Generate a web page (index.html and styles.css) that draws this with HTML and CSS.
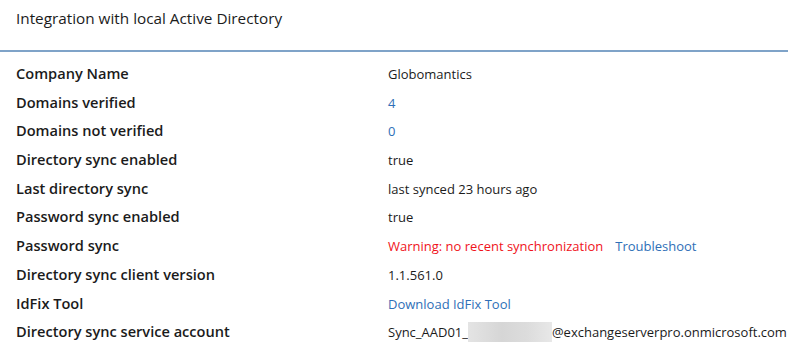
FILE: index.html
```html
<!doctype html>
<html lang="en">
  <head>
    <meta charset="UTF-8" />
    <title>Integration with local Active Directory</title>
    <link rel="stylesheet" href="styles.css">
  </head>
  <body>
    <main class="panel">
      <header class="panel-header">
        <h1 class="panel-title">Integration with local Active Directory</h1>
      </header>

      <dl class="props">
        <dt>Company Name</dt>
        <dd>Globomantics</dd>

        <dt>Domains verified</dt>
        <dd><a href="#" class="link">4</a></dd>

        <dt>Domains not verified</dt>
        <dd><a href="#" class="link">0</a></dd>

        <dt>Directory sync enabled</dt>
        <dd>true</dd>

        <dt>Last directory sync</dt>
        <dd>last synced 23 hours ago</dd>

        <dt>Password sync enabled</dt>
        <dd>true</dd>

        <dt>Password sync</dt>
        <dd>
          <span class="warning">Warning: no recent synchronization</span>
          <a href="#" class="link">Troubleshoot</a>
        </dd>

        <dt>Directory sync client version</dt>
        <dd>1.1.561.0</dd>

        <dt>IdFix Tool</dt>
        <dd><a href="#" class="link">Download IdFix Tool</a></dd>

        <dt>Directory sync service account</dt>
        <dd class="account">Sync_AAD01_<span class="redacted"></span>@exchangeserverpro.onmicrosoft.com</dd>
      </dl>
    </main>
  </body>
</html>
```

FILE: styles.css
```css
* {
  margin: 0;
  padding: 0;
  box-sizing: border-box;
}

body {
  font-family: "Open Sans", "Noto Sans", sans-serif;
  font-size: 13px;
  color: #1b1b1b;
  background: #ffffff;
  width: 802px;
  height: 360px;
  overflow: hidden;
}

.panel {
  width: 788px;
}

.panel-header {
  height: 52px;
  padding: 7px 16px 0;
  border-bottom: 2px solid #7fa3c8;
}

.panel-title {
  font-size: 15.3px;
  font-weight: 500;
  color: #1b1b1b;
  line-height: 22px;
}

.props {
  display: grid;
  grid-template-columns: 372px 1fr;
  grid-auto-rows: 28.7px;
  align-items: baseline;
  padding: 10px 0 0 16px;
  line-height: 22px;
}

.props dt {
  font-size: 14.6px;
  font-weight: 600;
  color: #1b1b1b;
}

.props dd {
  display: flex;
  align-items: baseline;
  gap: 12px;
  white-space: nowrap;
}

.props dd.account {
  display: block;
}

.link {
  color: #2f6fb7;
  text-decoration: none;
}

.warning {
  color: #f0131b;
}

.redacted {
  display: inline-block;
  width: 84px;
  height: 20px;
  vertical-align: -5px;
  background: linear-gradient(90deg, #e4e4e4, #d6d6d6 40%, #dcdcdc 70%, #e8e8e8);
}
```
